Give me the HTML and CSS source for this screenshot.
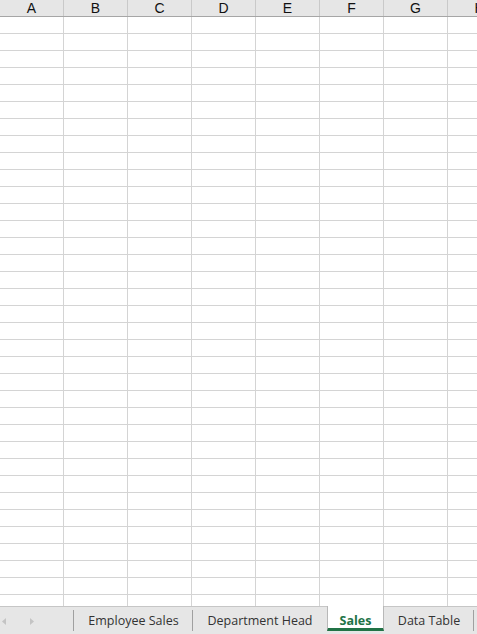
FILE: index.html
```html
<!DOCTYPE html>
<html>
<head>
<meta charset="utf-8">
<link rel="stylesheet" href="styles.css">
</head>
<body>
<div class="sheet">
  <div class="col-header">
    <div class="col">A</div>
    <div class="col">B</div>
    <div class="col">C</div>
    <div class="col">D</div>
    <div class="col">E</div>
    <div class="col">F</div>
    <div class="col">G</div>
    <div class="col">H</div>
  </div>
  <div class="grid"></div>
  <div class="tabbar">
    <div class="nav">
      <svg class="arrow" width="4" height="7" viewBox="0 0 4 7"><polygon points="4,0 4,7 0,3.5" fill="#c4c4c4"/></svg>
      <svg class="arrow" width="4" height="7" viewBox="0 0 4 7"><polygon points="0,0 0,7 4,3.5" fill="#c4c4c4"/></svg>
    </div>
    <div class="tab tab-employee">Employee Sales</div>
    <div class="tab tab-dept">Department Head</div>
    <div class="tab tab-active">Sales</div>
    <div class="tab tab-data">Data Table</div>
  </div>
</div>
</body>
</html>
```

FILE: styles.css
```css
html, body {
  margin: 0;
  padding: 0;
  background: #ffffff;
  overflow: hidden;
}

.sheet {
  width: 477px;
  height: 634px;
  display: flex;
  flex-direction: column;
  overflow: hidden;
}

.col-header {
  display: flex;
  height: 16px;
  background: #e6e6e6;
  border-bottom: 1px solid #a6a6a6;
  flex: none;
}

.col {
  flex: none;
  width: 63px;
  border-right: 1px solid #c9c9c9;
  text-align: center;
  font-family: "Liberation Sans", Arial, sans-serif;
  font-size: 14px;
  line-height: 16px;
  color: #111111;
}

.grid {
  flex: 1;
  background-color: #ffffff;
  background-image:
    linear-gradient(to right, transparent 63px, #d4d4d4 63px),
    linear-gradient(to bottom, transparent 16px, #d4d4d4 16px);
  background-size: 64px 100%, 100% 17px;
}

.tabbar {
  flex: none;
  height: 27px;
  border-top: 1px solid #c6c6c6;
  background: #e6e6e6;
  display: flex;
  align-items: stretch;
  font-family: "Open Sans", "Noto Sans", sans-serif;
  font-size: 12.5px;
  color: #333333;
}

.nav {
  width: 74px;
  display: flex;
  align-items: center;
  gap: 24px;
  padding-left: 2px;
  padding-top: 2px;
  box-sizing: border-box;
  position: relative;
}

.nav::after {
  content: "";
  position: absolute;
  right: 0;
  top: 3px;
  height: 21px;
  width: 1px;
  background: #a0a0a0;
}

.tab {
  display: flex;
  align-items: center;
  justify-content: center;
  box-sizing: border-box;
  height: 24px;
  padding-top: 3px;
  position: relative;
}

.tab-employee {
  width: 119px;
}

.tab-dept {
  width: 134px;
}

.tab-employee::after,
.tab-data::after {
  content: "";
  position: absolute;
  right: 0;
  top: 3px;
  height: 21px;
  width: 1px;
  background: #a0a0a0;
}

.tab-active {
  width: 57px;
  margin-top: -1px;
  height: 25px;
  background: #ffffff;
  border-left: 1px solid #b8b8b8;
  border-right: 1px solid #b8b8b8;
  border-bottom: 3px solid #217346;
  color: #217346;
  font-weight: 700;
  padding-top: 7px;
}

.tab-data {
  width: 90px;
}
```
